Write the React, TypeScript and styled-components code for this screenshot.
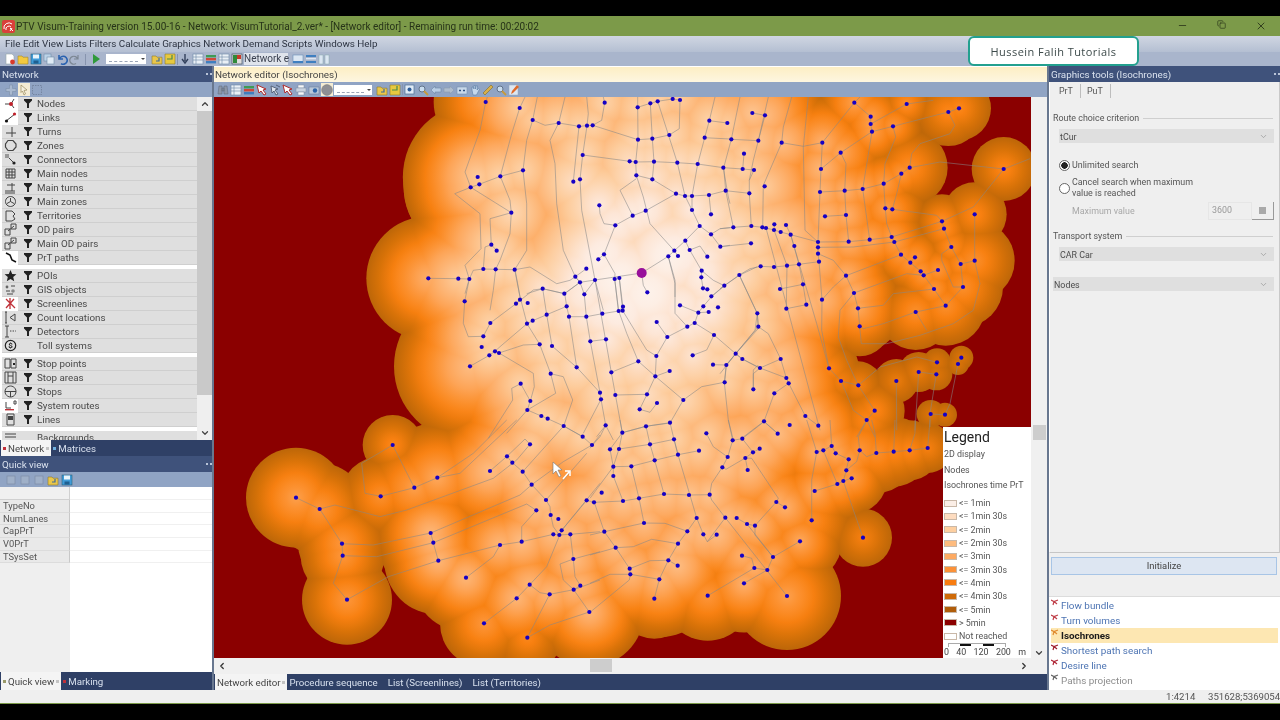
import React from "react";
import styled, { createGlobalStyle } from "styled-components";
import { Minus, Copy, X, ChevronUp, ChevronDown, ChevronLeft, ChevronRight } from "lucide-react";

const UI_FONT = `Roboto, "Noto Sans", "Liberation Sans", sans-serif`;

const GlobalStyle = createGlobalStyle`
  html, body { margin: 0; padding: 0; background: #000; }
  body { font-family: ${UI_FONT}; }
  * { box-sizing: border-box; }
`;

/* ---------- map data: coordinates are read off 3x crops, (x0,y0) is the crop origin ---------- */

type Crop = { x0: number; y0: number; nodes: string; roads: string[] };

const crops: Crop[] = [
  {
    x0: 400,
    y0: 97,
    nodes:
      "257,15 359,33 398,69 476,78 537,88 561,86 578,85 614,17 713,31 751,19 773,13 818,6 840,9 928,71 982,78 914,122 714,128 757,125 808,114 548,174 689,193 707,195 762,194 832,197 893,201 970,212 709,235 757,247 828,290 855,297 876,297 927,294 977,281 876,339 933,352 899,387 933,412 961,449 856,431 823,461 805,478 834,477 869,459 922,479 905,521 904,541 909,574 922,577 973,566 934,598 598,325 698,356 737,341 646,385 612,472 595,487 559,515 526,539 540,556 585,549 644,546 658,543 742,586 553,592 428,575 493,590 344,518 287,517 250,516 208,546 175,545 85,544 274,443 290,461 334,347 369,220 301,238 238,262 233,240 212,271 520,254 540,247",
    roads: [
      "257,15 240,100 195,225 212,271",
      "257,15 262,0",
      "375,0 359,33 335,110 301,238 330,310 334,347 330,410 300,490 287,517 280,580 270,640",
      "412,0 398,69 380,130 369,220 380,320 380,460 344,518 360,600",
      "398,69 435,85 476,78 537,88 561,86 578,85 714,128 757,125 808,114 838,95 840,9",
      "578,85 605,70 614,17 610,0",
      "495,0 476,78 450,130 465,200 470,320 490,460 526,539 540,556",
      "560,0 565,50 561,86 548,174 540,247 545,340 585,549 610,640",
      "537,88 520,254",
      "548,174 689,193 707,195 762,194 832,197 893,201 970,212",
      "713,31 714,128 707,195 709,235 730,300 750,380 823,461",
      "713,0 713,31 751,19 773,13 818,6 840,9",
      "751,19 757,125 762,194 757,247",
      "773,13 832,197 855,297 876,339",
      "945,0 928,71 914,122 893,201 876,297 876,339",
      "928,71 982,78",
      "914,122 990,126",
      "970,212 985,300 990,320",
      "709,235 757,247 828,290 737,341 698,356 646,385 612,380 600,350 598,325",
      "698,356 660,280 709,245",
      "646,385 612,472 595,487",
      "612,472 645,530 644,546 655,640",
      "828,290 855,297 876,297 927,294 977,281",
      "927,294 933,352",
      "876,339 899,387 856,431 823,461 805,478 725,528 585,549 540,556 526,539 559,515",
      "725,528 730,565 742,586",
      "899,387 933,412 961,449 990,445",
      "933,412 960,395 990,392",
      "823,461 834,477",
      "805,478 825,550 825,600",
      "856,431 869,459 905,521 904,541 909,574",
      "869,459 900,447 922,479",
      "905,521 940,550 973,566",
      "973,566 934,598",
      "85,544 175,545 208,546 220,520 250,516 287,517 344,518 390,510 470,560 510,550 526,539",
      "212,271 238,262 301,238 369,220",
      "212,271 164,290 240,350 243,455 195,505 208,546 195,590",
      "212,271 334,347 270,365 274,443 290,461",
      "274,443 255,450 250,516",
      "540,556 553,592 585,549",
      "540,556 493,590 428,575 380,590",
      "658,543 670,640",
    ],
  },
  {
    x0: 720,
    y0: 97,
    nodes:
      "403,17 452,59 452,81 456,104 560,21 685,45 717,34 519,88 97,48 135,55 22,78 34,127 115,131 185,137 307,137 362,167 72,170 11,212 68,216 102,219 303,216 569,212 544,230 491,260 428,276 374,281 300,285 134,268 17,281 88,289 851,216 496,334 517,337 666,373 672,395 764,352 315,358 378,354 40,391 94,387 127,391 138,393 163,382 198,384 162,399 182,405 212,413 294,435 294,451 294,470 386,434 449,428 515,420 523,435 694,450 543,473 585,481 571,497 223,447 93,439 2,449 297,494 237,502 201,506 162,510 122,508 58,534 13,566 378,536 602,523 611,535 654,519 722,501 764,491 642,576 729,570 402,588 249,562 180,576 306,608 259,623 199,635 414,634 677,626 587,645 419,688 112,649 115,689 47,770 67,786 19,804 120,813 182,786 14,856 100,877 199,843 206,859 163,889 327,814 363,852 415,865 724,782 714,801 651,796 596,825 649,832 529,852 464,941 440,969 632,951 675,953 132,973 209,984 173,1010 256,957 295,986",
    roads: [
      "215,0 190,90 185,137 130,265 128,390",
      "265,0 250,150 255,400 294,435",
      "138,393 220,700 300,1000",
      "212,413 290,680 327,814",
      "420,0 403,17 307,137 303,216 300,285 294,435 294,470 297,494 306,608 305,700 327,814 363,852 415,865 480,810 590,780 651,796",
      "403,17 452,59 452,81 456,104 362,167 303,216",
      "452,81 560,21 640,10",
      "456,104 519,88 685,45 717,34",
      "685,45 705,85 690,110 600,140 575,170 569,212",
      "456,104 428,276",
      "519,88 527,120 495,200 491,260",
      "569,212 544,230 491,260 428,276 374,281 300,285",
      "569,212 660,195 851,216 930,185",
      "544,230 530,290 517,337 496,334 491,260",
      "517,337 650,355 666,373 672,395",
      "666,373 760,330 851,216",
      "496,334 500,380 515,420 449,428 386,434 294,435",
      "666,373 515,420",
      "672,395 523,435 400,450 294,451",
      "515,420 523,435 543,473 378,536",
      "294,470 340,490 378,536 402,588 414,634 419,688 424,740 500,740 600,715 700,680 760,640 780,560 764,491 764,352",
      "378,536 340,570 306,608",
      "672,395 694,450 722,501 729,570",
      "694,450 665,470 665,490 700,570 729,570",
      "722,501 764,491",
      "729,570 677,626 587,645",
      "543,473 571,497 602,523 611,535 642,576 677,626",
      "571,497 585,481",
      "611,535 654,519",
      "611,535 560,530 402,588",
      "642,576 520,590 490,625 414,634",
      "587,645 620,700",
      "587,645 490,680 430,695 419,688",
      "402,588 360,640 355,720 380,790 415,865",
      "0,395 40,391 94,387 127,391 138,393 162,399 182,405 212,413 294,435",
      "198,384 212,413",
      "17,281 40,391",
      "60,0 34,127 11,212 17,281",
      "34,127 115,131",
      "145,0 115,131 100,190 88,250 88,289 94,387",
      "97,48 135,55 115,131",
      "72,170 68,216",
      "11,212 68,216 102,219 88,250",
      "17,281 88,289",
      "185,137 250,148 307,137",
      "362,167 378,200 374,281 378,354 386,434",
      "315,358 378,354",
      "428,276 449,428",
      "163,382 162,399 201,506 199,635",
      "212,413 237,502 249,562 259,623",
      "122,508 162,510 201,506 237,502 297,494",
      "180,576 249,562",
      "199,635 259,623",
      "2,449 93,439",
      "122,508 90,515 58,534 13,566 0,575",
      "58,534 112,649 115,689 47,770",
      "115,689 145,710 182,786 199,843 206,859 256,957 295,986",
      "112,649 105,700 47,770 0,830",
      "47,770 67,786 120,813 199,843",
      "120,813 182,786",
      "120,813 100,830 100,877",
      "19,804 47,770",
      "19,804 14,856",
      "206,859 163,889 132,973 173,1010",
      "132,973 70,1020",
      "415,865 464,941 440,969 410,1020",
      "440,969 465,1020",
      "724,782 714,801 690,920 675,953",
      "649,832 630,950 630,990",
      "596,825 585,1000",
      "529,852 530,1000",
      "632,951 675,953",
      "596,825 649,832",
      "363,852 400,940 440,969",
    ],
  },
  {
    x0: 240,
    y0: 420,
    nodes:
      "458,75 422,229 523,203 592,173 168,233 239,267 306,371 308,407 321,539 572,339 580,368 595,422 678,473 780,375 845,365 940,343 958,345 965,331 991,343 889,271 932,285 955,297 918,240 875,194 848,155 817,128 801,109 870,73 750,153 971,18 1028,50 1056,75 1040,241 1062,247 1000,417 1021,497 1001,509 869,494 929,523 830,535 732,610 862,653 1048,576",
    roads: [
      "168,233 239,267 285,255 420,290 500,270 760,175 830,120 870,73",
      "801,109 855,57 870,73",
      "750,153 801,109 817,128 848,155 875,194 918,240 930,260 932,285 940,320 958,345",
      "239,267 306,371 308,407 280,490 321,539",
      "306,371 400,375 572,339 840,225 875,194",
      "580,368 860,252 889,271 845,320 845,365",
      "308,407 410,410 580,368 595,422",
      "572,339 580,368",
      "321,539 445,470 595,422 780,375 845,365 940,343 958,345 991,343 1080,335",
      "458,75 365,130 375,220 422,229 523,203 592,173 700,100 800,0",
      "458,75 523,203",
      "592,173 660,160 830,0",
      "678,473 760,410 780,375",
      "732,610 830,535 869,494 920,440 965,331 1080,190",
      "869,494 900,518 929,523 1001,509 1080,480",
      "929,523 862,653 930,615 1048,576 1001,509",
      "1000,417 991,343",
      "1000,417 1005,470 1021,497 1001,509 970,480 960,432 1000,417 1080,395",
      "875,194 970,125 1056,75 1080,45",
      "848,155 971,18 1028,50 1056,75",
      "918,240 1040,100",
      "965,331 1040,241 1062,247",
    ],
  },
  {
    x0: 590,
    y0: 420,
    nodes:
      "47,16 97,38 168,19 240,8 7,76 60,88 87,87 180,73 252,58 349,40 428,61 457,56 522,5 598,15 564,41 684,18 830,3 680,96 700,91 725,78 737,100 776,118 809,91 859,99 911,95 959,91 1013,84 264,104 194,121 124,139 70,140 70,168 327,92 413,111 466,114 489,97 509,86 397,142 473,150 769,151 785,175 760,183 742,192 674,213 35,218 13,247 99,243 147,235 222,222 297,225 359,224 559,246 585,262 320,294 406,293 440,294 471,312 495,317 665,301 292,334 340,343 380,344 43,335 162,309 77,383 264,371 819,353 630,364 549,411 456,407 493,444 532,450 462,490 235,421 263,437 119,446 121,463 208,478 193,536 353,527 591,528 0,577",
    roads: [
      "47,16 30,50 7,76 0,85",
      "97,38 168,19 240,8",
      "90,0 97,38 60,88 70,140 70,168",
      "97,38 87,87 70,140 0,235",
      "87,87 180,73 252,58 264,104",
      "168,19 180,73 194,121 222,222",
      "240,8 252,58 264,104 320,294 340,343 352,365 406,293",
      "352,365 380,344",
      "70,140 124,139 194,121 264,104 327,92",
      "124,139 147,235 162,309",
      "70,168 99,243",
      "13,247 99,243 147,235 222,222 297,225 359,224",
      "13,247 43,335 77,383 119,446 121,463 208,478",
      "43,335 162,309 225,310 292,334 320,294",
      "0,345 43,335",
      "0,405 77,383 130,380 185,358 264,371 292,334",
      "264,371 235,421 263,437",
      "235,421 180,422 119,446",
      "235,421 208,478 193,536",
      "0,490 60,463 121,463 118,480 0,577",
      "349,40 370,80 413,111 428,61 457,56 522,5",
      "415,0 428,61",
      "457,56 489,97 466,114 408,148 397,142 413,111",
      "397,142 365,190 359,224",
      "489,97 509,86",
      "466,114 473,150",
      "466,114 485,115 565,235 559,246 495,317 471,312 440,294",
      "559,246 585,262",
      "359,224 365,240 406,293 591,528",
      "471,312 549,411 532,450 462,490",
      "495,317 495,345 549,411 630,364",
      "532,450 493,444 485,415 456,407",
      "493,444 353,527",
      "522,5 564,41",
      "650,0 680,96 665,180 665,301",
      "674,213 742,192 760,183 785,175",
      "700,91 742,192",
      "720,0 725,78 737,100 776,118 769,151 760,183 819,353",
      "680,96 700,91 725,78",
      "769,151 800,125 809,91 830,110 859,99 911,95 959,91 1013,84",
      "809,91 805,50 830,3",
      "859,99 855,40 845,0",
      "911,95 915,0",
      "959,91 975,40 975,0",
      "1013,84 1020,0",
    ],
  },
  {
    x0: 400,
    y0: 200,
    nodes:
      "348,311 360,299 383,309 500,319 440,344 507,350 559,350 607,341 656,333 669,320 668,332 398,362 381,371 271,369 250,409 245,441 285,454 297,459 268,466 210,499 419,433 456,438 571,424 618,418 530,502 452,521 634,517 715,484 769,468 766,529 809,513 362,551 391,603 382,630 424,648 443,656 491,678 548,710 600,578 603,598 646,585 741,583 719,628 771,609 850,600 973,547 809,669 737,679 667,698 617,676 822,715 919,700 1026,715 1060,568 1007,461 1027,477 979,495 939,494 942,405 878,466 884,369 862,380 802,411 770,366 840,316 895,338 926,336 910,319 954,322 934,291 1072,341 1075,380 194,304 428,266 494,281 553,284",
    roads: [
      "428,266 494,281 540,247",
      "428,266 400,270 348,311 271,369 250,409",
      "194,304 190,370 205,410 250,409",
      "208,237 194,304",
      "360,299 348,311",
      "345,208 360,290 381,371 419,433 452,521 467,580 382,630",
      "428,266 440,344 456,438",
      "494,281 500,319 507,350 530,502",
      "500,319 440,344 398,362 381,371 300,440 285,454",
      "507,350 559,350 607,341 656,333 669,320",
      "585,240 634,517 667,698",
      "553,284 559,350 571,424 600,578 603,598 617,676 640,720",
      "644,237 656,333 680,400 715,484",
      "658,235 668,332 740,450 769,468 766,529 809,513",
      "571,424 618,418",
      "634,517 715,484 766,529 850,600 905,560 973,547",
      "850,600 810,669 737,679 667,698",
      "646,585 741,583 766,529",
      "741,583 719,628 750,637 771,609",
      "297,459 370,435 419,433",
      "456,438 530,502 600,578",
      "285,454 268,466 210,499",
      "297,459 400,520 403,560 391,603 362,551 335,565 338,600 265,715",
      "382,630 320,700",
      "391,603 382,630 424,648 443,656 491,678 548,710",
      "452,521 490,530 518,600 491,678",
      "603,598 550,700",
      "617,676 590,710",
      "770,366 802,411 862,380 884,369 895,338 926,336",
      "802,411 769,468",
      "840,316 895,338 910,319 934,291 973,257",
      "884,369 942,405 1007,461",
      "942,405 920,450 878,466",
      "939,494 979,495 973,547 985,660 1000,720",
      "1007,461 1080,380",
      "979,495 1007,461 1027,477 1080,505",
      "1060,568 1060,510 1075,495",
      "862,380 825,340 825,250 805,170",
      "973,257 1018,226 1072,200",
      "1018,226 1072,341 1075,380",
    ],
  },
];

// nodes on the rim of the reached area: screen x, y, radius of the blob
const rim: [number, number, number][] = [
  [296, 498, 50], [320, 509, 46], [392, 445, 30], [347, 600, 45], [342, 544, 44], [343, 556, 42],
  [484, 623, 44], [527, 638, 34], [708, 596, 45], [787, 596, 54], [654, 599, 40], [863, 538, 29],
  [812, 520, 40], [1004, 169, 32], [959, 108, 32], [948, 112, 34], [910, 168, 38], [975, 214, 32],
  [975, 261, 40], [963, 287, 40], [946, 306, 40], [916, 312, 38], [860, 326, 30], [858, 316, 34],
  [961, 358, 12], [958, 364, 11], [937, 362, 14], [936, 374, 16], [919, 372, 20], [896, 381, 22],
  [931, 414, 14], [945, 415, 12], [858, 385, 24], [875, 411, 30], [867, 420, 35], [928, 448, 25],
  [910, 450, 30], [894, 452, 35], [876, 453, 40], [860, 450, 42], [486, 102, 52], [471, 187, 67],
  [428, 278, 62], [465, 301, 70], [470, 366, 76], [381, 496, 40], [414, 488, 50], [437, 478, 55],
  [842, 381, 26], [829, 368, 30],
];

const ORIGIN = { x: 641.7, y: 273 };

const parsePts = (s: string, c: Crop) =>
  s.split(" ").map((p) => {
    const [a, b] = p.split(",").map(Number);
    return { x: c.x0 + a / 3, y: c.y0 + b / 3 };
  });

const nodes: { x: number; y: number }[] = [];
crops.forEach((c) =>
  parsePts(c.nodes, c).forEach((n) => {
    if (!nodes.some((m) => Math.hypot(m.x - n.x, m.y - n.y) < 3)) nodes.push(n);
  })
);

const roads = crops.flatMap((c) =>
  c.roads.map((r) =>
    parsePts(r, c)
      .map((p) => `${p.x.toFixed(1)},${p.y.toFixed(1)}`)
      .join(" ")
  )
);

const ramp: [number, string][] = [
  [0, "#fff8f3"], [1, "#fbeadf"], [1.5, "#fddabb"], [2, "#fdcc9c"], [2.5, "#fdb97c"], [3, "#fda75c"],
  [3.5, "#fc9232"], [4, "#f88010"], [4.5, "#d87208"], [5, "#bc6608"],
];

const colorAt = (t: number) => {
  let i = 0;
  while (i < ramp.length - 2 && ramp[i + 1][0] < t) i++;
  const [t0, a] = ramp[i];
  const [t1, b] = ramp[i + 1];
  const k = Math.min(1, Math.max(0, (t - t0) / (t1 - t0)));
  const ch = (s: string, o: number) => parseInt(s.slice(o, o + 2), 16);
  const mix = (o: number) => Math.round(ch(a, o) + (ch(b, o) - ch(a, o)) * k);
  return `rgb(${mix(1)},${mix(3)},${mix(5)})`;
};

const blobs = nodes.map((n) => {
  const d = Math.hypot(n.x - ORIGIN.x, n.y - ORIGIN.y);
  const hit = rim.find((e) => Math.hypot(e[0] - n.x, e[1] - n.y) < 5);
  const east = Math.min(1, Math.max(0, ((n.x - 700) / 100) * 0.5));
  const reach = Math.min(4.2, 3.6 * (1 - Math.exp(-d / 150)) + east);
  const r = hit ? hit[2] : 31 * (5 - reach);
  const t = hit ? (5 - r / 31) * 0.96 : 3.15 * (1 - Math.exp(-d / 190)) + east;
  return { ...n, r, level: Math.max(0, Math.round(t * 5)) };
});

const levels = Array.from(new Set(blobs.map((b) => b.level)));

/* ---------- chrome ---------- */

const Page = styled.div`
  width: 1280px;
  height: 720px;
  padding: 16px 0;
  background: #000;
  overflow: hidden;
  position: relative;
  display: flex;
  flex-direction: column;
  filter: blur(0.35px);
`;

const TitleBar = styled.div`
  height: 20px;
  background: #7c9a49;
  display: flex;
  align-items: center;
  color: #263318;
  font-size: 10px;
  padding-left: 2px;
  white-space: nowrap;
`;

const AppLogo = styled.div`
  width: 13px;
  height: 13px;
  background: #d9403a;
  border-radius: 2px;
  margin-right: 1px;
  display: flex;
`;

const WindowButtons = styled.div`
  margin-left: auto;
  display: flex;
  color: #33401f;
`;

const WindowButton = styled.div`
  width: 39px;
  display: flex;
  justify-content: center;
`;

const MenuBar = styled.div`
  height: 16px;
  background: linear-gradient(#d0d6e2, #b4bfd2);
  color: #2d3442;
  font-size: 9.85px;
  line-height: 16px;
  padding-left: 5px;
  white-space: nowrap;
`;

const MainToolbar = styled.div`
  height: 14px;
  background: #a9b5cc;
  display: flex;
  align-items: center;
  padding-left: 4px;
  gap: 1px;
`;

const ToolCell = styled.div<{ $on?: boolean }>`
  width: 12px;
  height: 13px;
  flex: none;
  display: flex;
  align-items: center;
  justify-content: center;
  background: ${(p) => (p.$on ? "#f4ecd4" : "transparent")};
`;

const Combo = styled.div<{ $w: number; $l: number; $r: number }>`
  width: ${(p) => p.$w}px;
  height: 10px;
  flex: none;
  margin: 0 ${(p) => p.$r}px 0 ${(p) => p.$l}px;
  background: #fff;
  position: relative;
  &::before {
    content: "";
    position: absolute;
    left: 3px;
    right: 8px;
    bottom: 2px;
    border-bottom: 1px dashed #9aa5b8;
  }
  &::after {
    content: "";
    position: absolute;
    right: 1px;
    top: 4px;
    border: 2px solid transparent;
    border-top-color: #444;
  }
`;

const ToolSep = styled.div<{ $m: number }>`
  width: 1px;
  height: 11px;
  margin: 0 ${(p) => p.$m}px;
  flex: none;
  background: #8794ae;
`;

const InlineCombo = styled.div`
  flex: none;
  width: 44px;
  height: 12px;
  margin-right: 3px;
  background: #dfe4ec;
  color: #3a4150;
  font-size: 10px;
  line-height: 12px;
  white-space: nowrap;
`;

const Badge = styled.div`
  position: absolute;
  left: 968px;
  top: 36px;
  width: 171px;
  height: 30px;
  background: #fff;
  border: 2px solid #23a08f;
  border-radius: 6px;
  color: #3d4a4a;
  font-family: "Open Sans", sans-serif;
  font-size: 11px;
  font-weight: 500;
  letter-spacing: 0.45px;
  display: flex;
  align-items: center;
  justify-content: center;
`;

const Panes = styled.div`
  height: 624px;
  display: flex;
  background: #68778f;
`;

const Column = styled.div<{ $w: number; $mx?: number }>`
  width: ${(p) => p.$w}px;
  margin: 0 ${(p) => p.$mx || 0}px;
  flex: none;
  display: flex;
  flex-direction: column;
  min-height: 0;
`;

const PaneHeader = styled.div`
  height: 16px;
  flex: none;
  background: #3f527b;
  color: #d9e1ee;
  font-size: 9.8px;
  line-height: 18px;
  padding-left: 2px;
  position: relative;
  white-space: nowrap;
  &::after {
    content: "";
    position: absolute;
    right: 4px;
    top: 7px;
    width: 2px;
    height: 2px;
    background: #b9c4d8;
    box-shadow: 4px 0 0 #b9c4d8;
  }
`;

const EditorHeader = styled.div`
  height: 16px;
  flex: none;
  background: linear-gradient(#fdeec4, #fdf6e0);
  border-top: 1px solid #fff;
  color: #444;
  font-size: 9.9px;
  line-height: 16px;
  padding-left: 1px;
`;

const PaneToolbar = styled.div<{ $gap?: number; $left?: number }>`
  height: 15px;
  flex: none;
  background: #90a4c4;
  display: flex;
  align-items: center;
  padding-left: ${(p) => (p.$left === undefined ? 5 : p.$left)}px;
  gap: ${(p) => (p.$gap === undefined ? 1 : p.$gap)}px;
`;

const NodeList = styled.div`
  height: 343px;
  flex: none;
  display: flex;
  overflow: hidden;
  background: #e6e6e6;
`;

const ListBody = styled.div`
  width: 197px;
  flex: none;
  padding-left: 2px;
  background: #fff;
`;

const ListRow = styled.div`
  height: 14px;
  display: flex;
  align-items: center;
  background: #dfdfdf;
  border-bottom: 1px solid #cfcfcf;
  color: #4a4a4a;
  font-size: 9.8px;
  white-space: nowrap;
`;

const IconCell = styled.div<{ $white?: boolean }>`
  width: 16px;
  height: 14px;
  flex: none;
  display: flex;
  align-items: center;
  justify-content: center;
  background: ${(p) => (p.$white ? "#fff" : "transparent")};
`;

const FilterCell = styled.div`
  width: 19px;
  flex: none;
  display: flex;
  justify-content: center;
`;

const GroupGap = styled.div`
  height: 4px;
  background: #fff;
`;

const ScrollTrack = styled.div`
  width: 15px;
  flex: none;
  display: flex;
  flex-direction: column;
  background: #efefef;
  color: #444;
`;

const ScrollThumb = styled.div`
  height: 284px;
  background: #c9c9c9;
`;

const ScrollSpace = styled.div`
  flex: 1;
`;

const ScrollArrow = styled.div`
  height: 14px;
  display: flex;
  justify-content: center;
  align-items: center;
`;

const TabStrip = styled.div<{ $h: number }>`
  height: ${(p) => p.$h}px;
  flex: none;
  background: #2f4066;
  display: flex;
  align-items: stretch;
  padding-left: 1px;
  color: #d8e0ee;
  font-size: 9.7px;
  white-space: nowrap;
`;

const Tab = styled.div<{ $active?: boolean }>`
  display: flex;
  align-items: center;
  gap: 2px;
  padding: 0 2px;
  margin-right: ${(p) => (p.$active ? "0" : "6px")};
  background: ${(p) => (p.$active ? "#f4f4f4" : "transparent")};
  color: ${(p) => (p.$active ? "#444" : "#d8e0ee")};
`;

const TabMark = styled.span<{ $c: string }>`
  width: 3px;
  height: 3px;
  flex: none;
  background: ${(p) => p.$c};
`;

const Grid = styled.div`
  flex: 1;
  min-height: 0;
  background: #fff;
  display: grid;
  grid-template-columns: 70px 1fr;
  grid-auto-rows: min-content;
  align-content: start;
  position: relative;
  &::before {
    content: "";
    position: absolute;
    left: 0;
    top: 0;
    bottom: 0;
    width: 70px;
    background: #efefef;
  }
`;

const GridHead = styled.div`
  height: 13px;
  background: #f0f0f0;
  border-bottom: 1px solid #d0d0d0;
  border-right: 1px solid #d0d0d0;
  position: relative;
`;

const GridName = styled.div`
  height: 12.7px;
  position: relative;
  background: #e9e9e9;
  border-bottom: 1px solid #dcdcdc;
  border-right: 1px solid #c8c8c8;
  color: #555;
  font-size: 9.4px;
  line-height: 12px;
  padding-left: 3px;
`;

const GridValue = styled.div`
  height: 12.7px;
  position: relative;
  border-bottom: 1px solid #f0f0f0;
`;

const MapRow = styled.div`
  height: 561px;
  flex: none;
  display: flex;
  position: relative;
`;

const MapSvg = styled.svg`
  width: 817px;
  height: 561px;
  flex: none;
  display: block;
  isolation: isolate;
  background: #8b0000;
`;

const Blob = styled.circle`
  mix-blend-mode: lighten;
`;

const Road = styled.polyline`
  fill: none;
  stroke: #868686;
  stroke-width: 0.65;
  opacity: 0.85;
`;

const NodeDot = styled.circle`
  fill: #1600c4;
`;

const VScroll = styled.div`
  width: 16px;
  flex: none;
  background: #f0f0f0;
  display: flex;
  flex-direction: column;
  color: #444;
  padding-top: 328px;
  align-items: center;
`;

const VThumb = styled.div`
  width: 13px;
  height: 15px;
  background: #cdcdcd;
  margin-bottom: 208px;
`;

const HScroll = styled.div`
  height: 16px;
  flex: none;
  background: #f0f0f0;
  display: flex;
  align-items: center;
  justify-content: space-between;
  padding: 0 18px 0 3px;
  position: relative;
  color: #333;
`;

const HThumb = styled.div`
  position: absolute;
  left: 376px;
  top: 1px;
  width: 22px;
  height: 13px;
  background: #cdcdcd;
`;

const Legend = styled.div`
  position: absolute;
  left: 729px;
  top: 330px;
  width: 88px;
  height: 231px;
  background: #fff;
  color: #555;
  font-size: 8.9px;
  padding-left: 1px;
  white-space: nowrap;
`;

const LegendTitle = styled.div`
  color: #222;
  font-size: 14px;
  line-height: 20px;
`;

const LegendLine = styled.div`
  height: 15.5px;
  line-height: 15.5px;
`;

const LegendRow = styled.div`
  height: 13.3px;
  display: flex;
  align-items: center;
  gap: 2px;
`;

const LegendGroup = styled.div`
  margin-top: 3px;
`;

const Swatch = styled.div<{ $c: string }>`
  width: 13px;
  height: 7px;
  flex: none;
  background: ${(p) => p.$c};
  border: 1px solid #c9b8a8;
`;

const ScaleBar = styled.div`
  height: 4px;
  margin: 0 25px 0 4px;
  border: 1px solid #aaa;
  border-bottom: 0;
  background: linear-gradient(
    90deg,
    #fff 0 20%,
    #111 20% 40%,
    #fff 40% 60%,
    #111 60% 80%,
    #fff 80%
  );
  background-size: 100% 2px;
  background-repeat: no-repeat;
`;

const ScaleNumbers = styled.div`
  display: flex;
  justify-content: space-between;
  line-height: 11px;
  padding-right: 5px;
  color: #444;
`;

const ToolsPanel = styled.div`
  height: 471px;
  flex: none;
  background: #efefef;
  border-bottom: 1px solid #c6c6c6;
  border-right: 1px solid #c9c9c9;
  border-left: 1px solid #fff;
  color: #555;
  font-size: 8.9px;
`;

const SubTabs = styled.div`
  height: 18px;
  display: flex;
  align-items: center;
  padding-left: 9px;
`;

const SubTab = styled.div`
  padding-right: 7px;
  margin-right: 6px;
  border-right: 1px solid #bdbdbd;
  line-height: 14px;
`;

const GroupTitle = styled.div<{ $mt: number }>`
  margin: ${(p) => p.$mt}px 6px 0 3px;
  height: 14px;
  display: flex;
  align-items: center;
  gap: 4px;
  white-space: nowrap;
  &::after {
    content: "";
    flex: 1;
    height: 1px;
    background: #cfcfcf;
  }
`;

const Select = styled.div<{ $mt: number; $ml: number }>`
  margin: ${(p) => p.$mt}px 5px 0 ${(p) => p.$ml}px;
  height: 14px;
  background: #dfdfdf;
  line-height: 14px;
  padding: 1px 6px 0 1px;
  display: flex;
  justify-content: space-between;
  align-items: center;
  color: #4c4c4c;
`;

const RadioRow = styled.div<{ $mt: number }>`
  margin: ${(p) => p.$mt}px 0 0 9px;
  display: flex;
  align-items: center;
  gap: 2px;
  line-height: 11px;
  min-height: 14px;
`;

const Radio = styled.div<{ $on?: boolean }>`
  width: 11px;
  height: 11px;
  flex: none;
  border-radius: 50%;
  border: 1px solid #666;
  background: ${(p) => (p.$on ? "radial-gradient(circle, #222 0 3px, #fff 3.5px)" : "#fff")};
`;

const MaxRow = styled.div`
  margin: 3px 5px 0 22px;
  height: 18px;
  display: flex;
  align-items: center;
  color: #a8a8a8;
`;

const MaxInput = styled.div`
  margin-left: auto;
  width: 44px;
  height: 18px;
  border: 1px solid #e6e6e6;
  padding-left: 3px;
  line-height: 14px;
  color: #999;
`;

const MaxButton = styled.div`
  width: 22px;
  height: 18px;
  border-right: 1px solid #999;
  border-bottom: 1px solid #999;
  display: flex;
  align-items: center;
  justify-content: center;
  &::after {
    content: "";
    width: 7px;
    height: 7px;
    background: #a9a9a9;
  }
`;

const ActionBar = styled.div`
  height: 44px;
  flex: none;
  background: #efefef;
  padding: 4px 3px 0 2px;
  border-bottom: 1px solid #dcdcdc;
`;

const ActionButton = styled.div`
  height: 18px;
  background: #dde6f2;
  border: 1px solid #a8c5e6;
  color: #444;
  font-size: 9.4px;
  line-height: 16px;
  text-align: center;
`;

const ToolList = styled.div`
  flex: 1;
  background: #fff;
  padding: 1px 2px 0 2px;
`;

const ToolRow = styled.div<{ $active?: boolean; $muted?: boolean }>`
  height: 15px;
  display: flex;
  align-items: flex-start;
  background: ${(p) => (p.$active ? "#fde7b2" : "transparent")};
  color: ${(p) => (p.$active ? "#1c1c1c" : p.$muted ? "#8d8d8d" : "#4d74b3")};
  font-weight: ${(p) => (p.$active ? 700 : 400)};
  font-size: 9.9px;
  line-height: 15px;
  white-space: nowrap;
`;

const ToolMark = styled.div`
  width: 10px;
  flex: none;
  padding-top: 1px;
  display: flex;
`;

const StatusBar = styled.div`
  height: 13px;
  flex: none;
  background: #efefef;
  color: #555;
  font-size: 9.6px;
  line-height: 13px;
  display: flex;
  white-space: nowrap;
  overflow: hidden;
`;

const StatusCell = styled.div<{ $w: number }>`
  width: ${(p) => p.$w}px;
  flex: none;
  &:first-child {
    margin-left: 1166px;
  }
`;

const GreenEdge = styled.div`
  height: 1px;
  flex: none;
  background: #7c9a49;
`;

/* ---------- small drawings ---------- */

const glyphs: Record<string, React.ReactNode> = {
  sheet: (
    <>
      <path d="M2 1h6l2 2v8H2z" fill="#fff" stroke="#9aa" strokeWidth=".6" />
      <circle cx="8.5" cy="9" r="2.4" fill="#d83a2a" />
    </>
  ),
  folder: <path d="M1 3h4l1 1.2h5V11H1z" fill="#f3c93f" stroke="#a98a24" strokeWidth=".6" />,
  folderUp: (
    <>
      <path d="M1 3h4l1 1.2h5V11H1z" fill="#e9c64a" stroke="#8f7a2a" strokeWidth=".6" />
      <path d="M5 8h3V5" stroke="#3d6a9a" fill="none" strokeWidth="1.2" />
    </>
  ),
  saveY: (
    <>
      <path d="M1 1h10v10H1z" fill="#e7c93f" stroke="#8f7a2a" strokeWidth=".6" />
      <path d="M3 6h5V2" stroke="#4a8a4a" fill="none" strokeWidth="1.2" />
    </>
  ),
  save: (
    <>
      <rect x="1" y="1" width="10" height="10" fill="#3f9bd8" stroke="#256" strokeWidth=".5" />
      <rect x="3" y="1.5" width="6" height="4" fill="#e8f4fb" />
      <rect x="3.5" y="7.5" width="5" height="3" fill="#1f5f90" />
    </>
  ),
  copy: (
    <>
      <rect x="1" y="1" width="7" height="7" fill="#bcd3e8" stroke="#6f8ca8" strokeWidth=".6" />
      <rect x="4" y="4" width="7" height="7" fill="#dfeaf4" stroke="#6f8ca8" strokeWidth=".6" />
    </>
  ),
  undo: <path d="M3 2v4h4M3.4 6a4 4 0 1 1 1.6 4.6" fill="none" stroke="#2a62b0" strokeWidth="1.6" />,
  redo: <path d="M9 2v4H5M8.6 6A4 4 0 1 0 7 10.6" fill="none" stroke="#7c8794" strokeWidth="1.2" />,
  play: <path d="M3 1l7 5-7 5z" fill="#2f9a3a" />,
  down: <path d="M6 1v7M3 6l3 4 3-4" fill="none" stroke="#33415c" strokeWidth="1.4" />,
  table: (
    <>
      <rect x="1" y="1" width="10" height="10" fill="#eaf0f6" stroke="#6b87a6" strokeWidth=".6" />
      <path d="M1 4h10M1 7h10M4 1v10" stroke="#6b87a6" strokeWidth=".6" />
    </>
  ),
  layers: (
    <>
      <rect x="1" y="2" width="10" height="2.4" fill="#3f9a55" />
      <rect x="1" y="5" width="10" height="2.4" fill="#d0483a" />
      <rect x="1" y="8" width="10" height="2.4" fill="#3f7fc0" />
    </>
  ),
  colorGrid: (
    <>
      <rect x="1" y="1" width="10" height="10" fill="#ddd" stroke="#345" strokeWidth=".6" />
      <rect x="2" y="2" width="4" height="8" fill="#2f8a3a" />
      <rect x="6" y="2" width="4" height="4" fill="#c83a2a" />
    </>
  ),
  paneH: (
    <>
      <rect x="1" y="2" width="10" height="8" fill="#dbe6f2" stroke="#6a8fb8" strokeWidth=".6" />
      <rect x="1" y="8" width="10" height="2" fill="#3f7fc0" />
    </>
  ),
  paneM: (
    <>
      <rect x="1" y="2" width="10" height="2" fill="#3f7fc0" />
      <rect x="1" y="8" width="10" height="2" fill="#3f7fc0" />
      <rect x="1" y="5" width="10" height="1.4" fill="#dbe6f2" />
    </>
  ),
  paneV: (
    <>
      <rect x="1" y="2" width="4" height="9" fill="#dbe6f2" stroke="#8aa" strokeWidth=".5" />
      <rect x="7" y="2" width="4" height="9" fill="#dbe6f2" stroke="#8aa" strokeWidth=".5" />
    </>
  ),
  binoc: <path d="M2 2h3v8H1zM7 2h3l1 8H7zM5 4h2v3H5z" fill="#8c97a8" stroke="#5b6577" strokeWidth=".5" />,
  pick: <path d="M1 1l9 4-3 1 3 4-2 1-3-4-2 2z" fill="#fff" stroke="#b02a2a" strokeWidth="1" />,
  pick2: <path d="M2 2l7 3-3 1 3 4-2 1-2-4-2 2zM7 1l4 2" fill="#dfe6ef" stroke="#4d5a70" strokeWidth=".9" />,
  print: (
    <>
      <rect x="3" y="1" width="6" height="3" fill="#f4f6f9" stroke="#7c8aa0" strokeWidth=".5" />
      <rect x="1" y="4" width="10" height="4" fill="#c9d3e0" stroke="#7c8aa0" strokeWidth=".5" />
      <rect x="3" y="8" width="6" height="3" fill="#f4f6f9" stroke="#7c8aa0" strokeWidth=".5" />
    </>
  ),
  cam: (
    <>
      <rect x="1" y="3" width="10" height="7" fill="#b9c8da" stroke="#5d7290" strokeWidth=".5" />
      <circle cx="7" cy="6.5" r="2.2" fill="#2c64a8" />
    </>
  ),
  disc: <circle cx="6" cy="6" r="5.4" fill="#8e8f94" stroke="#777" strokeWidth=".5" />,
  zoom: (
    <>
      <rect x="1" y="1" width="9" height="9" fill="#dfeaf6" stroke="#4f6f96" strokeWidth=".7" />
      <circle cx="5.5" cy="5.5" r="2" fill="#2c5d9a" />
    </>
  ),
  glass: (
    <>
      <circle cx="5" cy="5" r="3" fill="#c8dcef" stroke="#61728a" />
      <path d="M7 7l4 4" stroke="#c79a3a" strokeWidth="1.8" />
    </>
  ),
  back: <path d="M1 6l4-4v2h6v4H5v2z" fill="#b9cde4" stroke="#6b87a6" strokeWidth=".6" />,
  forward: <path d="M11 6L7 2v2H1v4h6v2z" fill="#aebccd" stroke="#8a9ab0" strokeWidth=".6" />,
  fit: (
    <>
      <rect x="1" y="3" width="10" height="7" fill="#c8d8ea" stroke="#6b87a6" strokeWidth=".5" />
      <path d="M3 6.5h2M7 6.5h2" stroke="#2c4f80" strokeWidth="1.4" />
    </>
  ),
  hand: <path d="M3 6V3l1 0 1 2V1.5h1.4V5l1-3.4 1.2.3L8 6l1.6-1.6.9.7L7.5 11H4z" fill="#c6d8ec" stroke="#5d7ea6" strokeWidth=".6" />,
  ruler: <path d="M1 9l8-8 2 2-8 8z" fill="#d8b04a" stroke="#7f6a2a" strokeWidth=".6" />,
  pencil: (
    <>
      <rect x="1" y="1" width="9" height="10" fill="#dde7f2" stroke="#8ea3bd" strokeWidth=".5" />
      <path d="M3 10l1-3 5-6 2 2-6 6z" fill="#df6a2a" />
    </>
  ),
  plus: <path d="M4.5 1h3v3.5H11v3H7.5V11h-3V7.5H1v-3h3.5z" fill="#a9b9cf" stroke="#7c8ea8" strokeWidth=".6" />,
  arrow: <path d="M3 1l6 5-3 .5L7.5 10 6 11 4.5 7 3 8.5z" fill="#f6f1df" stroke="#8b7a4a" strokeWidth=".6" />,
  dotted: <rect x="1.5" y="1.5" width="9" height="9" fill="none" stroke="#6e7f99" strokeWidth=".8" strokeDasharray="1.5 1" />,
  pasteOff: <rect x="2" y="2" width="8" height="8" fill="#9fb0c8" stroke="#7e8ea6" strokeWidth=".7" />,
};

const Tool = ({ k, on }: { k: string; on?: boolean }) => (
  <ToolCell $on={on}>
    <svg width="12" height="12" viewBox="0 0 12 12">
      {glyphs[k]}
    </svg>
  </ToolCell>
);

const lineIcon = (d: string, extra?: React.ReactNode) => (
  <>
    <path d={d} fill="none" stroke="#444" strokeWidth="1" />
    {extra}
  </>
);

const netIcons: Record<string, React.ReactNode> = {
  Nodes: lineIcon("M1 7h6M7 7l3-5M7 7l3 4", <circle cx="7" cy="7" r="2" fill="#c0202a" />),
  Links: lineIcon("M2 10L11 3", <><circle cx="2.5" cy="10" r="1.6" fill="#111" /><circle cx="10.5" cy="3" r="1.6" fill="#c0202a" /></>),
  Turns: lineIcon("M2 8h6V2M8 8v4M8 8h4"),
  Zones: <path d="M4 1.5h5l3 3.5v3l-3 3.5H4L1.5 8V5z" fill="none" stroke="#444" strokeWidth="1.2" />,
  Connectors: lineIcon("M2 2l8 8", <><circle cx="10" cy="10" r="1.6" fill="#222" /><rect x="1" y="1" width="4" height="4" fill="#999" /></>),
  "Main nodes": lineIcon("M2 2h9v9H2zM2 5h9M2 8h9M5 2v9M8 2v9"),
  "Main turns": lineIcon("M1 10h10M8 10V2M3 4h8M1 12h10"),
  "Main zones": lineIcon("M6.5 1.5a5 5 0 1 0 .01 0M6.5 6.5V3M6.5 6.5L3 8.5M6.5 6.5L10 8.5"),
  Territories: lineIcon("M2 2h6l3 3-2 2 2 3-3 2H2z"),
  "OD pairs": lineIcon("M1 6h5v6H1zM7 1h5v5H7zM4 8l6-5"),
  "Main OD pairs": lineIcon("M1 6h5v6H1zM7 1h5v5H7zM4 8l6-5"),
  "PrT paths": <path d="M2 2l4 2 2 5 4 2" fill="none" stroke="#111" strokeWidth="1.6" />,
  POIs: <path d="M6.5 1l1.7 3.9 4.2.4-3.2 2.8 1 4.1-3.7-2.2-3.7 2.2 1-4.1L.6 5.3l4.2-.4z" fill="#222" />,
  "GIS objects": lineIcon("M2 8h4M7 3h4M3 11h6", <><circle cx="3" cy="4" r="1.4" fill="#666" /><circle cx="9" cy="8" r="1.8" fill="#888" /></>),
  Screenlines: <path d="M2 2l9 9M10 2l-8 9M6 1v11" stroke="#c03038" strokeWidth="1.3" fill="none" />,
  "Count locations": lineIcon("M2 1v11M1 1h2M1 12h2M11 3L6 6.5l5 3.5z"),
  Detectors: lineIcon("M3 1v11M1 1h4M1 12h4", <path d="M6 6h6" stroke="#444" strokeDasharray="1.4 1.2" />),
  "Toll systems": (
    <>
      <circle cx="6.5" cy="6.5" r="5.2" fill="none" stroke="#222" strokeWidth="1.2" />
      <text x="6.5" y="9.4" textAnchor="middle" fontSize="8" fontWeight="700" fill="#222">$</text>
    </>
  ),
  "Stop points": lineIcon("M1 2h5v9H1zM7 2h5v9H7z", <rect x="9" y="6" width="2" height="2" fill="#222" />),
  "Stop areas": lineIcon("M1 1h11v11H1zM4 1v11M9 1v11M4 5h5"),
  Stops: lineIcon("M6.5 1a5.5 5.5 0 1 0 .01 0M1 6.5h11M6.5 6.5v5.5"),
  "System routes": lineIcon("M2 3v6h5M10 2h2v3h-2z", <rect x="1" y="10" width="9" height="1.4" fill="#c03038" />),
  Lines: lineIcon("M3 1h7v11H3z", <rect x="4" y="3" width="5" height="4" fill="#444" />),
  Backgrounds: lineIcon("M1 3h11M1 6h11"),
};

const groups: { name: string; white?: boolean; noFilter?: boolean }[][] = [
  [
    { name: "Nodes", white: true }, { name: "Links", white: true }, { name: "Turns" }, { name: "Zones" },
    { name: "Connectors" }, { name: "Main nodes" }, { name: "Main turns" }, { name: "Main zones" },
    { name: "Territories" }, { name: "OD pairs" }, { name: "Main OD pairs" }, { name: "PrT paths", white: true },
  ],
  [
    { name: "POIs" }, { name: "GIS objects" }, { name: "Screenlines", white: true }, { name: "Count locations" },
    { name: "Detectors" }, { name: "Toll systems", noFilter: true },
  ],
  [
    { name: "Stop points" }, { name: "Stop areas" }, { name: "Stops" }, { name: "System routes", white: true }, { name: "Lines" },
  ],
  [{ name: "Backgrounds", noFilter: true }],
];

const legendRows: [string, string][] = [
  ["<= 1min", "#fbeee6"],
  ["<= 1min 30s", "#fddcc0"],
  ["<= 2min", "#fdcfa0"],
  ["<= 2min 30s", "#fdbb7e"],
  ["<= 3min", "#fdaa62"],
  ["<= 3min 30s", "#fb9138"],
  ["<= 4min", "#f87c10"],
  ["<= 4min 30s", "#cf6a08"],
  ["<= 5min", "#b05d0a"],
  ["> 5min", "#8b0000"],
  ["Not reached", "#ffffff"],
];

const toolItems: { label: string; color: string; active?: boolean; muted?: boolean }[] = [
  { label: "Flow bundle", color: "#c0404a" },
  { label: "Turn volumes", color: "#c0404a" },
  { label: "Isochrones", color: "#e08a30", active: true },
  { label: "Shortest path search", color: "#a02030" },
  { label: "Desire line", color: "#b02a3a" },
  { label: "Paths projection", color: "#666", muted: true },
];

const FilterIcon = () => (
  <svg width="8" height="9" viewBox="0 0 8 9">
    <path d="M0 0h8v1.4L5 4.4V9H3V4.4L0 1.4z" fill="#222" />
  </svg>
);

const IsoMap = () => (
  <MapSvg viewBox="214 97 817 561">
    <defs>
      {levels.map((lv) => {
        const t0 = lv / 5;
        return (
          <radialGradient id={`iso-${lv}`} key={lv}>
            {Array.from({ length: 11 }, (_, i) => (
              <stop
                key={i}
                offset={i / 10}
                stopColor={colorAt(t0 + Math.pow(i / 10, 1.12) * (5 - t0))}
              />
            ))}
          </radialGradient>
        );
      })}
    </defs>
    {blobs.map((b, i) => (
      <Blob key={i} cx={b.x} cy={b.y} r={b.r} fill={`url(#iso-${b.level})`} />
    ))}
    {roads.map((pts, i) => (
      <Road key={i} points={pts} />
    ))}
    {nodes.map((n, i) => (
      <NodeDot key={i} cx={n.x} cy={n.y} r={2.1} />
    ))}
    <circle cx={ORIGIN.x} cy={ORIGIN.y} r={5} fill="#98109a" />
    <path d="M553 462v12l3-3 3 6 2-1-3-6h4z" fill="#fff" stroke="#777" strokeWidth=".6" />
    <path d="M563 479l6-7M565 471h5v5" fill="none" stroke="#fff" strokeWidth="1.5" />
  </MapSvg>
);

export default function App() {
  return (
    <Page>
      <GlobalStyle />
      <TitleBar>
        <AppLogo>
          <svg width="13" height="13" viewBox="0 0 13 13">
            <path d="M2 9a5 5 0 0 1 8-5M4 10a3 3 0 0 1 5-3M8 8l3 3M10 8l-2 3" fill="none" stroke="#fff" strokeWidth="1" />
          </svg>
        </AppLogo>
        PTV Visum-Training version 15.00-16 - Network: VisumTutorial_2.ver* - [Network editor] - Remaining run time: 00:20:02
        <WindowButtons>
          <WindowButton><Minus size={11} /></WindowButton>
          <WindowButton><Copy size={9} /></WindowButton>
          <WindowButton><X size={12} /></WindowButton>
        </WindowButtons>
      </TitleBar>
      <MenuBar>File Edit View Lists Filters Calculate Graphics Network Demand Scripts Windows Help</MenuBar>
      <MainToolbar>
        <Tool k="sheet" />
        <Tool k="folder" />
        <Tool k="save" />
        <Tool k="copy" />
        <Tool k="undo" />
        <Tool k="redo" />
        <ToolSep $m={3} />
        <Tool k="play" />
        <Combo $w={40} $l={3} $r={4} />
        <Tool k="folderUp" />
        <Tool k="saveY" />
        <ToolSep $m={0} />
        <Tool k="down" />
        <Tool k="table" />
        <Tool k="layers" />
        <Tool k="table" />
        <Tool k="colorGrid" />
        <InlineCombo>Network e</InlineCombo>
        <Tool k="paneH" />
        <Tool k="paneM" />
        <Tool k="paneV" />
      </MainToolbar>
      <Panes>
        <Column $w={212}>
          <PaneHeader>Network</PaneHeader>
          <PaneToolbar>
            <Tool k="plus" />
            <Tool k="arrow" on />
            <Tool k="dotted" />
          </PaneToolbar>
          <NodeList>
            <ListBody>
              {groups.map((g, gi) => (
                <React.Fragment key={gi}>
                  {gi > 0 && <GroupGap />}
                  {g.map((item) => (
                    <ListRow key={item.name}>
                      <IconCell $white={item.white}>
                        <svg width="13" height="13" viewBox="0 0 13 13">
                          {netIcons[item.name]}
                        </svg>
                      </IconCell>
                      <FilterCell>{!item.noFilter && <FilterIcon />}</FilterCell>
                      {item.name}
                    </ListRow>
                  ))}
                </React.Fragment>
              ))}
            </ListBody>
            <ScrollTrack>
              <ScrollArrow><ChevronUp size={10} strokeWidth={3} /></ScrollArrow>
              <ScrollThumb />
              <ScrollSpace />
              <ScrollArrow><ChevronDown size={10} strokeWidth={3} /></ScrollArrow>
            </ScrollTrack>
          </NodeList>
          <TabStrip $h={16}>
            <Tab $active><TabMark $c="#c0303a" />Network<TabMark $c="#c4c4c4" /></Tab>
            <Tab><TabMark $c="#6fb0e0" />Matrices</Tab>
          </TabStrip>
          <PaneHeader>Quick view</PaneHeader>
          <PaneToolbar $gap={2}>
            <Tool k="pasteOff" />
            <Tool k="pasteOff" />
            <Tool k="pasteOff" />
            <Tool k="folderUp" />
            <Tool k="save" />
          </PaneToolbar>
          <Grid>
            <GridHead />
            <GridValue />
            {["TypeNo", "NumLanes", "CapPrT", "V0PrT", "TSysSet"].map((n) => (
              <React.Fragment key={n}>
                <GridName>{n}</GridName>
                <GridValue />
              </React.Fragment>
            ))}
          </Grid>
          <TabStrip $h={18}>
            <Tab $active><TabMark $c="#9a9a6a" />Quick view<TabMark $c="#c4c4c4" /></Tab>
            <Tab><TabMark $c="#c0303a" />Marking</Tab>
          </TabStrip>
        </Column>
        <Column $w={833} $mx={2}>
          <EditorHeader>Network editor (Isochrones)</EditorHeader>
          <PaneToolbar $left={3}>
            <Tool k="binoc" />
            <Tool k="table" />
            <Tool k="layers" />
            <Tool k="pick" />
            <Tool k="pick2" />
            <Tool k="pick" />
            <Tool k="print" />
            <Tool k="cam" />
            <Tool k="disc" on />
            <Combo $w={38} $l={0} $r={3} />
            <Tool k="folderUp" />
            <Tool k="saveY" />
            <ToolSep $m={0} />
            <Tool k="zoom" />
            <Tool k="glass" />
            <Tool k="back" />
            <Tool k="forward" />
            <Tool k="fit" />
            <Tool k="hand" />
            <Tool k="ruler" />
            <Tool k="glass" />
            <Tool k="pencil" />
          </PaneToolbar>
          <MapRow>
            <IsoMap />
            <VScroll>
              <VThumb />
              <ChevronDown size={10} strokeWidth={3} />
            </VScroll>
            <Legend>
              <LegendTitle>Legend</LegendTitle>
              <LegendLine>2D display</LegendLine>
              <LegendLine>Nodes</LegendLine>
              <LegendLine>Isochrones time PrT</LegendLine>
              <LegendGroup>
                {legendRows.map(([label, c]) => (
                  <LegendRow key={label}>
                    <Swatch $c={c} />
                    {label}
                  </LegendRow>
                ))}
              </LegendGroup>
              <ScaleBar />
              <ScaleNumbers>
                <span>0</span><span>40</span><span>120</span><span>200</span><span>m</span>
              </ScaleNumbers>
            </Legend>
          </MapRow>
          <HScroll>
            <ChevronLeft size={10} strokeWidth={3} />
            <HThumb />
            <ChevronRight size={10} strokeWidth={3} />
          </HScroll>
          <TabStrip $h={16}>
            <Tab $active>Network editor<TabMark $c="#c4c4c4" /></Tab>
            <Tab>Procedure sequence</Tab>
            <Tab>List (Screenlines)</Tab>
            <Tab>List (Territories)</Tab>
          </TabStrip>
        </Column>
        <Column $w={231}>
          <PaneHeader>Graphics tools (Isochrones)</PaneHeader>
          <ToolsPanel>
            <SubTabs>
              <SubTab>PrT</SubTab>
              <SubTab>PuT</SubTab>
            </SubTabs>
            <GroupTitle $mt={11}>Route choice criterion</GroupTitle>
            <Select $mt={4} $ml={9}>tCur<ChevronDown size={9} color="#999" /></Select>
            <RadioRow $mt={15}><Radio $on />Unlimited search</RadioRow>
            <RadioRow $mt={5}>
              <Radio />
              <div>Cancel search when maximum<br />value is reached</div>
            </RadioRow>
            <MaxRow>
              Maximum value
              <MaxInput>3600</MaxInput>
              <MaxButton />
            </MaxRow>
            <GroupTitle $mt={9}>Transport system</GroupTitle>
            <Select $mt={4} $ml={9}>CAR Car<ChevronDown size={9} color="#999" /></Select>
            <Select $mt={16} $ml={3}>Nodes<ChevronDown size={9} color="#999" /></Select>
          </ToolsPanel>
          <ActionBar>
            <ActionButton>Initialize</ActionButton>
          </ActionBar>
          <ToolList>
            {toolItems.map((t) => (
              <ToolRow key={t.label} $active={t.active} $muted={t.muted}>
                <ToolMark>
                  <svg width="8" height="7" viewBox="0 0 8 7">
                    <path d="M0 1l3 1.5L7 1M3 2.5L2 6M3 2.5L6 5" fill="none" stroke={t.color} strokeWidth="1.2" />
                  </svg>
                </ToolMark>
                {t.label}
              </ToolRow>
            ))}
          </ToolList>
        </Column>
      </Panes>
      <StatusBar>
        <StatusCell $w={42}>1:4214</StatusCell>
        <StatusCell $w={72}>351628;5369054</StatusCell>
      </StatusBar>
      <GreenEdge />
      <Badge>Hussein Falih Tutorials</Badge>
    </Page>
  );
}
